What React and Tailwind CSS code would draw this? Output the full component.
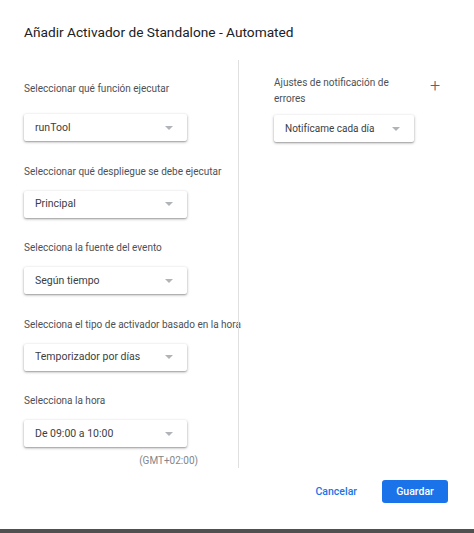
import { useState } from 'react'

const Arrow = () => (
  <svg width="8" height="4" viewBox="0 0 8 4" className="shrink-0">
    <path d="M0 0 L8 0 L4 4 Z" fill="#b0b4b8" />
  </svg>
)

const Select = ({ value, width = 'w-[163px]', size = 'text-[10.5px]' }) => (
  <div className={`${width} ${size} h-[27px] bg-white rounded-[2px] shadow-[0_1px_3px_rgba(0,0,0,0.35),0_1px_1px_rgba(0,0,0,0.12)] flex items-center justify-between pl-[11px] pr-[14px] text-[#3c4043]`}>
    <span>{value}</span>
    <Arrow />
  </div>
)

const Field = ({ label, value, first }) => (
  <div className={first ? 'mt-[21px]' : 'mt-[22.5px]'}>
    <div className={`h-4 leading-4 text-[10px] text-[#4d5156] whitespace-nowrap ${first ? 'mb-[17px]' : 'mb-[11px]'}`}>
      {label}
    </div>
    <Select value={value} />
  </div>
)

const App = () => {
  const [fields] = useState([
    { label: 'Seleccionar qué función ejecutar', value: 'runTool' },
    { label: 'Seleccionar qué despliegue se debe ejecutar', value: 'Principal' },
    { label: 'Selecciona la fuente del evento', value: 'Según tiempo' },
    { label: 'Selecciona el tipo de activador basado en la hora', value: 'Temporizador por días' },
    { label: 'Selecciona la hora', value: 'De 09:00 a 10:00' },
  ])

  return (
    <div className="w-[474px] h-[533px] bg-white flex flex-col font-['Roboto','Liberation_Sans',sans-serif] overflow-hidden">
      <h1 className="pt-[22px] pl-6 h-[60px] text-[13.7px] leading-5 text-[#202124]">
        Añadir Activador de Standalone - Automated
      </h1>

      <div className="flex">
        {/* left column */}
        <div className="w-[238px] shrink-0 pl-6">
          {fields.map((f, i) => (
            <Field key={f.label} label={f.label} value={f.value} first={i === 0} />
          ))}
          <div className="w-[174px] text-right text-[10px] leading-4 mt-[6px] text-[#80868b]">(GMT+02:00)</div>
        </div>

        <div className="w-px shrink-0 h-[408px] bg-[#e0e0e0]" />

        {/* right column */}
        <div className="pl-[35px] pt-[15px]">
          <div className="flex items-start">
            <div className="w-[140px] text-[10px] leading-4 text-[#4d5156]">
              Ajustes de notificación de errores
            </div>
            <div className="ml-[16px] mt-[1px] text-[18px] leading-5 font-light text-[#5f6368]">+</div>
          </div>
          <div className="mt-[8px]">
            <Select value="Notifícame cada día" width="w-[140px]" size="text-[10px]" />
          </div>
        </div>
      </div>

      <div className="flex justify-end items-center gap-[25px] pr-[26px] mt-[11px]">
        <button className="text-[10.5px] font-medium text-[#1a73e8]">Cancelar</button>
        <button className="w-[66px] h-[23px] rounded-[3px] bg-[#1a73e8] text-white text-[10.5px] font-medium">
          Guardar
        </button>
      </div>

      <div className="mt-auto h-[4px] bg-[#505050]" />
    </div>
  )
}

export default App
